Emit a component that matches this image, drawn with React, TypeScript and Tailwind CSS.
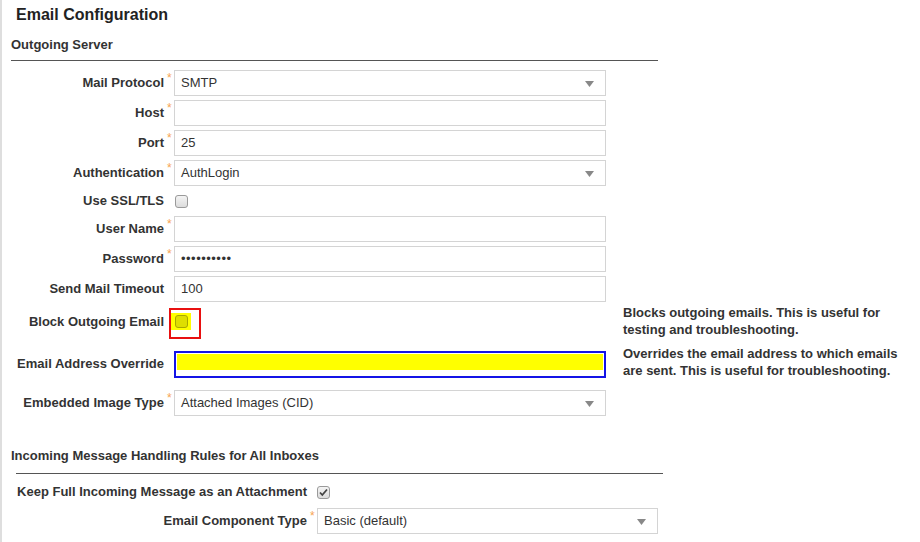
import React from "react";

const Star = (): JSX.Element => (
  <span className="w-[10px] self-start pl-[3px] pt-[2px] text-[12px] leading-none text-[#f7a452]">*</span>
);

const NoStar = (): JSX.Element => <span className="w-[10px]"></span>;

const Arrow = (): JSX.Element => (
  <svg width="9" height="6" viewBox="0 0 9 6" className="absolute right-[11px] top-[10px]">
    <path d="M0 0 L9 0 L4.5 6 Z" fill="#888" />
  </svg>
);

const TextBox = (props: { value?: string; select?: boolean; className?: string }): JSX.Element => (
  <div
    className={
      "relative h-[26px] border border-[#d4d4d4] bg-white pl-[6px] flex items-center text-[13px] text-[#333] " +
      (props.className ?? "w-[432px]")
    }
  >
    <span>{props.value}</span>
    {props.select && <Arrow />}
  </div>
);

const Checkbox = (props: { checked?: boolean; yellow?: boolean }): JSX.Element => (
  <span
    className={
      "relative inline-block w-[13px] h-[13px] rounded-[3px] border " +
      (props.yellow
        ? "border-[#a8a800] bg-[#dede00]"
        : "border-[#9a9a9a] bg-gradient-to-b from-[#f4f4f4] to-[#dcdcdc]")
    }
  >
    {props.checked && (
      <svg width="11" height="11" viewBox="0 0 11 11" className="absolute left-[0px] top-[0px]">
        <path d="M2 5.5 L4.3 8 L9 2.5" stroke="#444" strokeWidth="1.8" fill="none" />
      </svg>
    )}
  </span>
);

const Label = (props: { children: React.ReactNode; w?: string }): JSX.Element => (
  <span className={"text-right font-bold text-[13px] text-[#333] " + (props.w ?? "w-[162px]")}>
    {props.children}
  </span>
);

const App = (): JSX.Element => {
  return (
    <div className="min-h-[542px] w-[920px] bg-white border-l-2 border-[#dedede] font-['Liberation_Sans',Arial,sans-serif] text-[#333]">
      <div className="pt-[5px] pl-[14px] h-[25px] text-[16px] leading-[20px] font-bold text-[#222]">
        Email Configuration
      </div>

      <div className="mt-[12px] pl-[9px] h-[16px] text-[13px] leading-[16px] font-bold">Outgoing Server</div>
      <div className="mt-[7px] ml-[9px] w-[647px] border-t border-[#555]"></div>

      <div className="mt-[9px] flex flex-col">
        <div className="flex items-center h-[26px]">
          <Label>Mail Protocol</Label>
          <Star />
          <TextBox value="SMTP" select />
        </div>
        <div className="flex items-center h-[26px] mt-[4px]">
          <Label>Host</Label>
          <Star />
          <TextBox />
        </div>
        <div className="flex items-center h-[26px] mt-[4px]">
          <Label>Port</Label>
          <Star />
          <TextBox value="25" />
        </div>
        <div className="flex items-center h-[26px] mt-[4px]">
          <Label>Authentication</Label>
          <Star />
          <TextBox value="AuthLogin" select />
        </div>
        <div className="flex items-center h-[22px] mt-[4px]">
          <Label>Use SSL/TLS</Label>
          <NoStar />
          <span className="ml-[1px] flex">
            <Checkbox />
          </span>
        </div>
        <div className="flex items-center h-[26px] mt-[4px]">
          <Label>User Name</Label>
          <Star />
          <TextBox />
        </div>
        <div className="flex items-center h-[26px] mt-[4px]">
          <Label>Password</Label>
          <Star />
          <TextBox value="••••••••••" className="w-[432px] tracking-[0.5px]" />
        </div>
        <div className="flex items-center h-[26px] mt-[4px]">
          <Label>Send Mail Timeout</Label>
          <NoStar />
          <TextBox value="100" />
        </div>

        <div className="flex items-start h-[38px] mt-[4px]">
          <span className="h-[31px] flex items-center">
            <Label>Block Outgoing Email</Label>
          </span>
          <span className="w-[5px]"></span>
          <span className="mt-[2px] w-[32px] h-[31px] border-2 border-[#e81010]">
            <span className="block mt-[3px] w-[20px] h-[17px] bg-[#ffff00] pl-[4px] pt-[2px]">
              <span className="flex">
                <Checkbox yellow />
              </span>
            </span>
          </span>
          <span className="w-[405px]"></span>
          <span className="ml-[17px] -mt-[2px] w-[282px] text-[13px] leading-[17px] font-bold text-[#333]">
            Blocks outgoing emails. This is useful for testing and troubleshooting.
          </span>
        </div>

        <div className="flex items-start h-[38px] mt-[4px]">
          <span className="h-[31px] flex items-center">
            <Label>Email Address Override</Label>
          </span>
          <NoStar />
          <span className="mt-[3px] w-[432px] h-[27px] border-2 border-[#1414e6] p-[1px]">
            <span className="block h-[16px] bg-[#ffff00]"></span>
          </span>
          <span className="ml-[17px] -mt-[3px] w-[282px] text-[13px] leading-[17px] font-bold text-[#333]">
            Overrides the email address to which emails are sent. This is useful for troubleshooting.
          </span>
        </div>

        <div className="flex items-center h-[26px] mt-[4px]">
          <Label>Embedded Image Type</Label>
          <Star />
          <TextBox value="Attached Images (CID)" select />
        </div>
      </div>

      <div className="mt-[32px] pl-[9px] h-[16px] text-[13px] leading-[16px] font-bold">
        Incoming Message Handling Rules for All Inboxes
      </div>
      <div className="mt-[9px] ml-[14px] w-[647px] border-t border-[#555]"></div>

      <div className="mt-[8px] flex items-center h-[20px]">
        <Label w="w-[305px]">Keep Full Incoming Message as an Attachment</Label>
        <NoStar />
        <span className="flex">
          <Checkbox checked />
        </span>
      </div>
      <div className="mt-[6px] flex items-center h-[26px]">
        <Label w="w-[305px]">Email Component Type</Label>
        <Star />
        <TextBox value="Basic (default)" select className="w-[341px]" />
      </div>
    </div>
  );
};

export default App;
